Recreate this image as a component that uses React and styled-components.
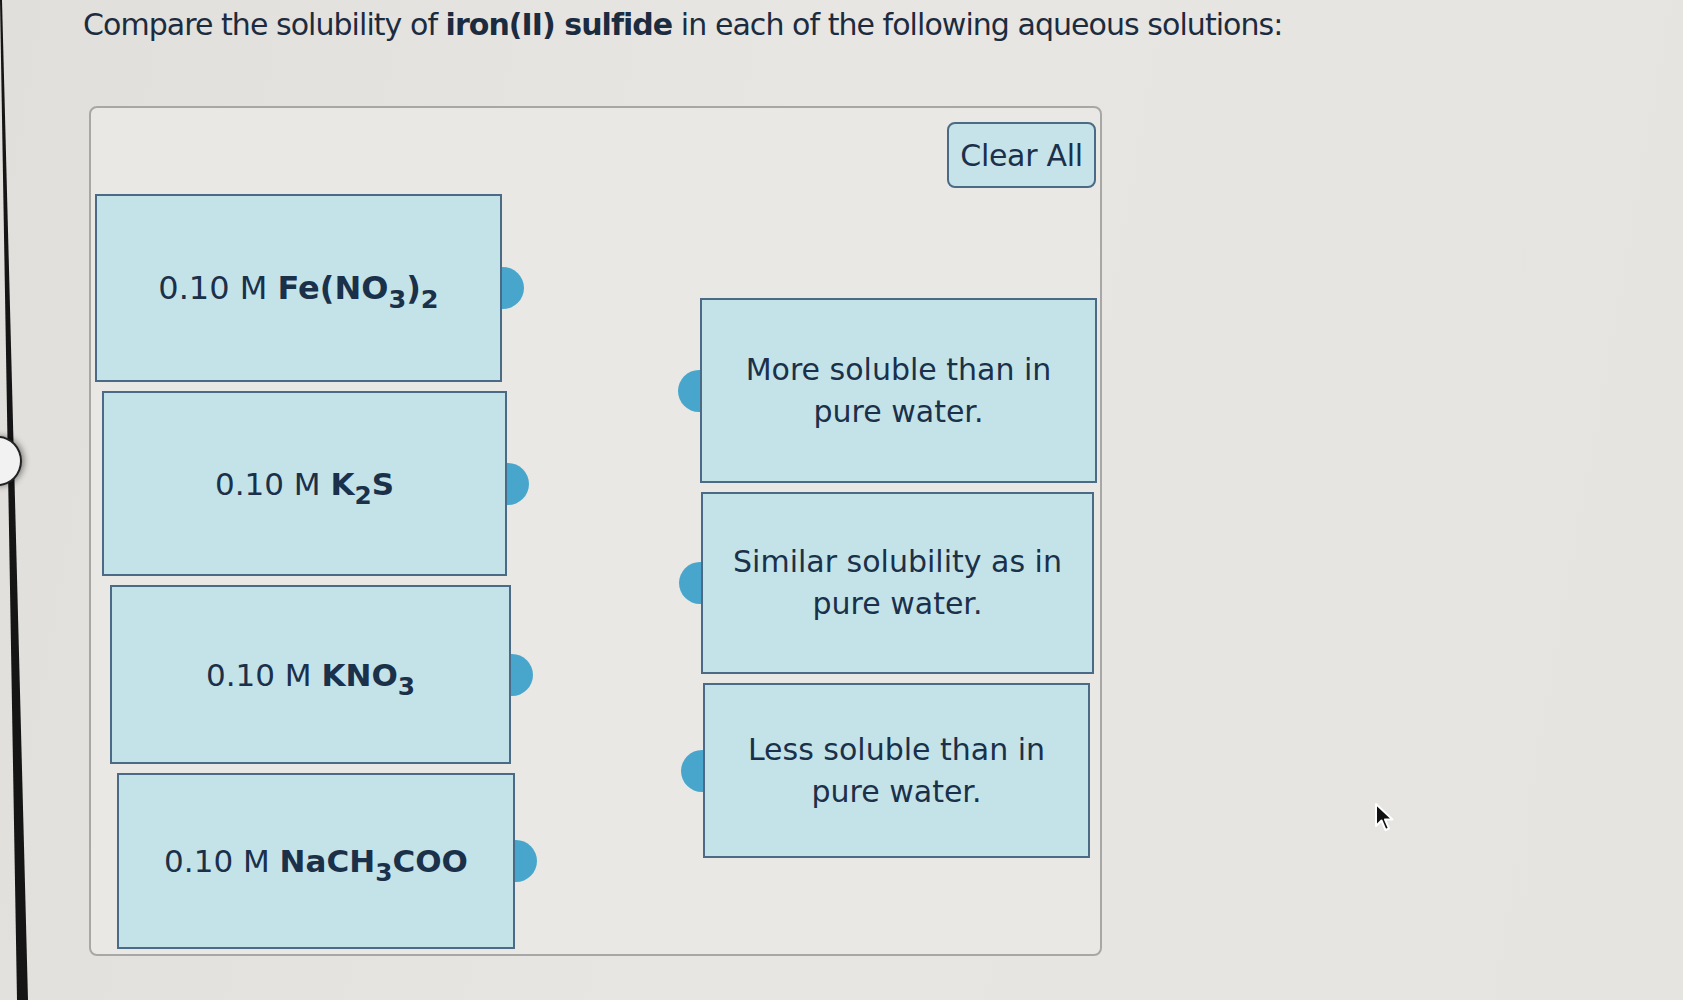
import React from "react";
import styled, { createGlobalStyle } from "styled-components";

const Global = createGlobalStyle`
  html, body { margin: 0; padding: 0; }
  body {
    background: linear-gradient(100deg, #e1dfdb 0%, #e8e6e2 45%, #e6e4e0 100%);
    font-family: "DejaVu Sans", Verdana, sans-serif;
    color: #1b3049;
    min-height: 1000px;
    overflow: hidden;
  }
`;

const Page = styled.div`
  position: relative;
  width: 1683px;
  height: 1000px;
  padding: 0 0 0 83px;
  box-sizing: border-box;
`;

const Prompt = styled.h1`
  margin: 0;
  padding-top: 6px;
  font-size: 30px;
  font-weight: normal;
  letter-spacing: -0.95px;
  color: #1c2c40;
  line-height: 38px;
  b { font-weight: bold; }
`;

const Board = styled.div`
  margin: 62px 0 0 6px;
  width: 1013px;
  height: 850px;
  box-sizing: border-box;
  border: 2px solid #a7a8a6;
  border-radius: 8px;
  background: #eae8e4;
  padding: 14px 4px 6px 4px;
  display: flex;
  flex-direction: column;
`;

const Toolbar = styled.div`
  display: flex;
  justify-content: flex-end;
  margin-bottom: 6px;
`;

const ClearButton = styled.button`
  width: 149px;
  height: 66px;
  border: 2px solid #4a6b85;
  border-radius: 8px;
  background: #c6e3e9;
  font-family: "DejaVu Sans", Verdana, sans-serif;
  font-size: 30px;
  letter-spacing: -0.3px;
  color: #1b3049;
  padding: 0;
`;

const Columns = styled.div`
  display: grid;
  grid-template-columns: 430px 400px;
  column-gap: 175px;
  align-items: start;
`;

const Stack = styled.div`
  display: flex;
  flex-direction: column;
  gap: 9px;
  margin-top: ${(p) => p.$offset || 0}px;
`;

const Card = styled.div`
  position: relative;
  width: ${(p) => p.$w}px;
  height: ${(p) => p.$h}px;
  margin-left: ${(p) => p.$shift || 0}px;
  box-sizing: border-box;
  border: 2px solid #4b6a86;
  background: #c4e3e9;
  display: flex;
  align-items: center;
  justify-content: center;
  text-align: center;
  font-size: ${(p) => p.$size || 30}px;
  line-height: 42px;
  color: #1b3049;
  padding: 0 14px;
  b { font-weight: bold; }
  sub {
    font-size: 0.8em;
    line-height: 0;
    vertical-align: -0.35em;
  }
`;

/* connector knob: half disc sticking out of a card */
const Knob = styled.span`
  position: absolute;
  top: 50%;
  width: 22px;
  height: 42px;
  margin-top: -21px;
  background: #48a6cd;
  ${(p) =>
    p.$side === "right"
      ? `right: -24px; border-radius: 0 21px 21px 0;`
      : `left: -24px; border-radius: 21px 0 0 21px;`}
`;

const Bezel = styled.div`
  position: absolute;
  left: 0;
  top: 0;
  width: 30px;
  height: 1000px;
  background: #151515;
  clip-path: polygon(0 0, 2px 0, 28px 100%, 17px 100%);
`;

const SideTab = styled.div`
  position: absolute;
  left: -26px;
  top: 436px;
  width: 44px;
  height: 46px;
  border-radius: 50%;
  background: #f2f2f2;
  border: 2px solid #222;
  box-shadow: 2px 0 6px rgba(0, 0, 0, 0.45);
`;

const Pointer = styled.svg`
  position: absolute;
  left: 1374px;
  top: 802px;
`;

const solutions = [
  { h: 188, w: 407, shift: 0, size: 32, label: <>0.10 M <b>Fe(NO<sub>3</sub>)<sub>2</sub></b></> },
  { h: 185, w: 405, shift: 7, size: 31, label: <>0.10 M <b>K<sub>2</sub>S</b></> },
  { h: 179, w: 401, shift: 15, size: 31, label: <>0.10 M <b>KNO<sub>3</sub></b></> },
  { h: 176, w: 398, shift: 22, size: 31, label: <>0.10 M <b>NaCH<sub>3</sub>COO</b></> },
];

const answers = [
  { h: 185, w: 397, shift: 0, text: ["More soluble than in", "pure water."] },
  { h: 182, w: 393, shift: 1, text: ["Similar solubility as in", "pure water."] },
  { h: 175, w: 387, shift: 3, text: ["Less soluble than in", "pure water."] },
];

export default function App() {
  return (
    <>
      <Global />
      <Page>
        <Prompt>
          Compare the solubility of <b>iron(II) sulfide</b> in each of the following aqueous solutions:
        </Prompt>
        <Board>
          <Toolbar>
            <ClearButton>Clear All</ClearButton>
          </Toolbar>
          <Columns>
            <Stack>
              {solutions.map((s, i) => (
                <Card key={i} $h={s.h} $w={s.w} $shift={s.shift} $size={s.size}>
                  <span>{s.label}</span>
                  <Knob $side="right" />
                </Card>
              ))}
            </Stack>
            <Stack $offset={104}>
              {answers.map((a, i) => (
                <Card key={i} $h={a.h} $w={a.w} $shift={a.shift}>
                  <span>
                    {a.text[0]}
                    <br />
                    {a.text[1]}
                  </span>
                  <Knob $side="left" />
                </Card>
              ))}
            </Stack>
          </Columns>
        </Board>
        <Bezel />
        <SideTab />
        <Pointer width="22" height="32" viewBox="0 0 22 32">
          <path d="M2 2 L2 24 L7.5 18.5 L11.5 28 L15 26.5 L11 17.5 L18.5 17.5 Z" fill="#111" stroke="#fff" strokeWidth="2" strokeLinejoin="round" />
        </Pointer>
      </Page>
    </>
  );
}
